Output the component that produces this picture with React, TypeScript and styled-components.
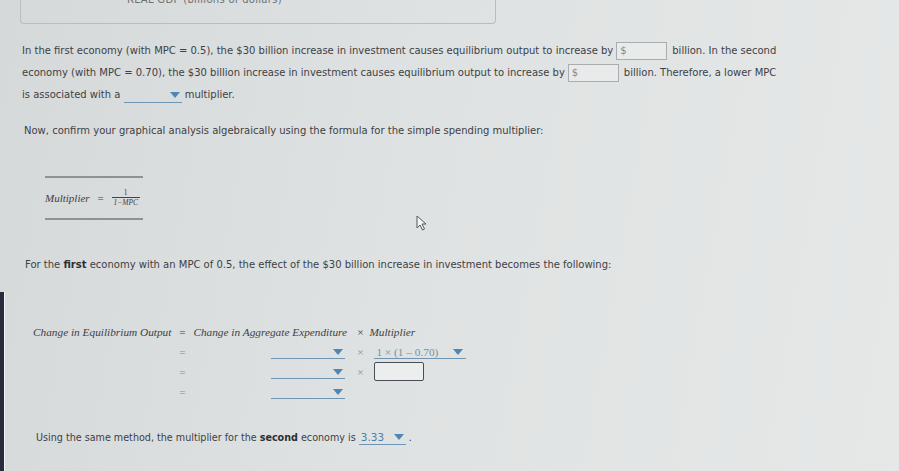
import { createGlobalStyle } from "styled-components";
import styled from "styled-components";

const GlobalStyle = createGlobalStyle`
  html, body {
    margin: 0;
    padding: 0;
  }
  body {
    width: 899px;
    height: 471px;
    overflow: hidden;
    background: linear-gradient(100deg, #d6d9da 0%, #dfe2e2 45%, #e6e8e8 100%);
    font-family: "DejaVu Sans", Verdana, sans-serif;
    color: #3d4144;
  }
`;

const Page = styled.div`
  position: relative;
  height: 471px;
  padding: 0 0 0 22px;
  box-sizing: border-box;
`;

const Bezel = styled.div`
  position: absolute;
  left: 0;
  top: 292px;
  bottom: 0;
  width: 4px;
  background: #262c3c;
  border-right: 1px solid #f2f4f4;
`;

const GraphStub = styled.div`
  width: 474px;
  height: 23px;
  margin-left: -2px;
  border: 1px solid #b9bdbe;
  border-top: none;
  border-radius: 0 0 4px 4px;
  overflow: hidden;
`;

const GraphTitle = styled.div`
  margin: -6px 0 0 106px;
  font-size: 10px;
  color: #6c7073;
  letter-spacing: 0.3px;
`;

const Para = styled.p<{ $top: number; $left?: number; $width?: number; $size?: number }>`
  margin: ${(p) => p.$top}px 0 0 ${(p) => p.$left ?? 0}px;
  width: ${(p) => p.$width ?? 820}px;
  font-size: ${(p) => p.$size ?? 10}px;
  line-height: 22px;
`;

const Strong = styled.b`
  font-weight: bold;
  color: #2c2f32;
`;

const DollarBox = styled.span`
  display: inline-block;
  vertical-align: middle;
  width: 46px;
  height: 16px;
  margin: 0 5px 0 3px;
  padding-left: 3px;
  border: 1px solid #a9adb0;
  background: #e9ebeb;
  color: #7d8c98;
  font-size: 10px;
  line-height: 16px;
`;

const Select = styled.span<{ $width: number; $tone?: string; $spread?: boolean }>`
  display: inline-flex;
  align-items: center;
  justify-content: ${(p) => (p.$spread ? "space-between" : "flex-end")};
  width: ${(p) => p.$width}px;
  height: 14px;
  padding: 0 2px;
  box-sizing: border-box;
  border-bottom: 1px solid #6f95b3;
  color: ${(p) => p.$tone ?? "#3d4144"};
  vertical-align: baseline;
`;

const Caret = () => (
  <svg width="10" height="6" viewBox="0 0 10 6">
    <path d="M0 0 L10 0 L5 6 Z" fill="#4f86b5" />
  </svg>
);

const Formula = styled.div`
  margin: 34px 0 0 23px;
  width: 98px;
`;

const Rule = styled.div`
  height: 2px;
  background: #8e9293;
`;

const FormulaRow = styled.div`
  display: flex;
  align-items: center;
  gap: 8px;
  height: 40px;
  font-family: "Liberation Serif", "Times New Roman", serif;
  font-style: italic;
  font-size: 11px;
`;

const Fraction = styled.span`
  display: inline-flex;
  flex-direction: column;
  align-items: center;
  font-size: 7.5px;
  font-style: italic;
  line-height: 8px;
`;

const Numer = styled.span`
  border-bottom: 1px solid #444;
  margin-bottom: 1px;
  padding: 0 12px;
  font-style: normal;
`;

const Cursor = styled.svg`
  position: absolute;
  left: 416px;
  top: 215px;
`;

const EqGrid = styled.div`
  display: grid;
  grid-template-columns: auto 22px 158px 18px auto;
  grid-auto-rows: 20px;
  align-items: center;
  margin: 46px 0 0 11px;
  width: max-content;
  white-space: nowrap;
  font-family: "Liberation Serif", "Times New Roman", serif;
  font-size: 11.3px;
`;

const Cell = styled.span<{ $align?: string; $italic?: boolean; $muted?: boolean }>`
  justify-self: ${(p) => p.$align ?? "start"};
  font-style: ${(p) => (p.$italic ? "italic" : "normal")};
  color: ${(p) => (p.$muted ? "#8a8f93" : "#3d4144")};
`;

const BlankSelect = styled(Select)`
  margin-right: 6px;
`;

const AnswerBox = styled.span`
  display: inline-block;
  width: 48px;
  height: 17px;
  border: 1px solid #4a4e52;
  border-radius: 2px;
  background: #eceeee;
  margin-left: 5px;
`;

const MultSelect = styled.span`
  display: inline-flex;
  align-items: center;
  justify-content: space-between;
  width: 92px;
  height: 14px;
  margin-left: 5px;
  padding: 0 3px 0 2px;
  box-sizing: border-box;
  border-bottom: 1px solid #6f95b3;
  color: #7d8f9d;
`;

export default function App() {
  return (
    <>
      <GlobalStyle />
      <Page>
        <Bezel />
        <GraphStub>
          <GraphTitle>REAL GDP (billions of dollars)</GraphTitle>
        </GraphStub>
        <Para $top={16} $width={760}>
          In the first economy (with MPC = 0.5), the $30 billion increase in
          investment causes equilibrium output to increase by
          <DollarBox>$</DollarBox>billion. In the second economy (with MPC =
          0.70), the $30 billion increase in investment causes equilibrium
          output to increase by<DollarBox>$</DollarBox>billion. Therefore, a
          lower MPC is associated with a{" "}
          <Select $width={58}>
            <Caret />
          </Select>{" "}
          multiplier.
        </Para>
        <Para $top={14} $left={2}>
          Now, confirm your graphical analysis algebraically using the formula
          for the simple spending multiplier:
        </Para>
        <Formula>
          <Rule />
          <FormulaRow>
            <span>Multiplier</span>
            <span style={{ fontStyle: "normal" }}>=</span>
            <Fraction>
              <Numer>1</Numer>
              <span>1−MPC</span>
            </Fraction>
          </FormulaRow>
          <Rule />
        </Formula>
        <Cursor width="11" height="16" viewBox="0 0 11 16">
          <path
            d="M1 1 L1 13 L4 10 L6.5 15 L8.5 14 L6 9 L10 9 Z"
            fill="#f4f6f6"
            stroke="#55595c"
            strokeWidth="1"
          />
        </Cursor>
        <Para $top={34} $left={3}>
          For the <Strong>first</Strong> economy with an MPC of 0.5, the effect
          of the $30 billion increase in investment becomes the following:
        </Para>
        <EqGrid>
          <Cell $italic $align="end">
            Change in Equilibrium Output
          </Cell>
          <Cell $align="center">=</Cell>
          <Cell $italic>Change in Aggregate Expenditure</Cell>
          <Cell $align="center">×</Cell>
          <Cell $italic>Multiplier</Cell>

          <span />
          <Cell $align="center" $muted>=</Cell>
          <Cell $align="end">
            <BlankSelect $width={74}>
              <Caret />
            </BlankSelect>
          </Cell>
          <Cell $align="center" $muted>×</Cell>
          <Cell>
            <MultSelect>
              <span>1 × (1 – 0.70)</span>
              <Caret />
            </MultSelect>
          </Cell>

          <span />
          <Cell $align="center" $muted>=</Cell>
          <Cell $align="end">
            <BlankSelect $width={74}>
              <Caret />
            </BlankSelect>
          </Cell>
          <Cell $align="center" $muted>×</Cell>
          <Cell>
            <AnswerBox />
          </Cell>

          <span />
          <Cell $align="center" $muted>=</Cell>
          <Cell $align="end">
            <BlankSelect $width={74}>
              <Caret />
            </BlankSelect>
          </Cell>
          <span />
          <span />
        </EqGrid>
        <Para $top={25} $left={14} $size={9.6}>
          Using the same method, the multiplier for the <Strong>second</Strong>{" "}
          economy is{" "}
          <Select $width={47} $tone="#4b7fa8" $spread>
            <span style={{ fontSize: 10.5 }}>3.33</span>
            <Caret />
          </Select>{" "}
          .
        </Para>
      </Page>
    </>
  );
}
